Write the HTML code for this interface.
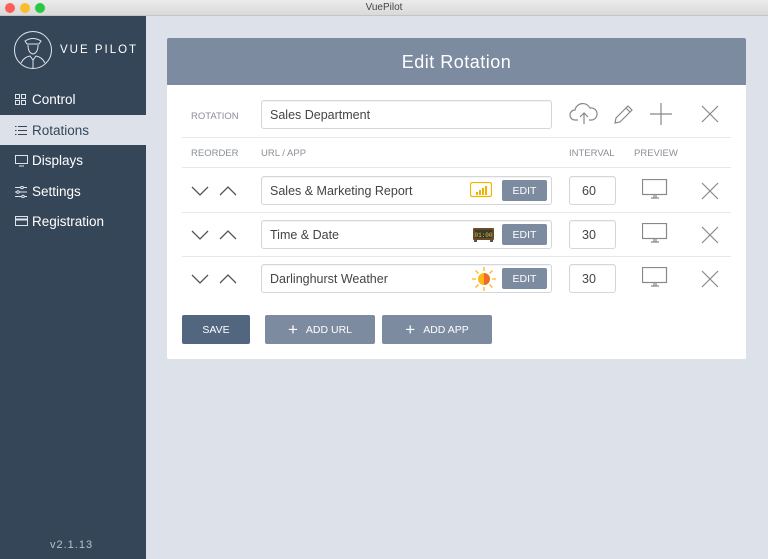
<!DOCTYPE html><html><head><style>
*{margin:0;padding:0;box-sizing:border-box}
body{width:768px;height:559px;overflow:hidden;font-family:"Liberation Sans",sans-serif;background:#dde2ea;position:relative}
.tb{position:absolute;left:0;top:0;width:768px;height:16px;background:linear-gradient(#ececec,#d9d9d9);border-bottom:1px solid #c4c4c4;text-align:center;font-size:10px;line-height:16px;color:#444}
.dot{position:absolute;top:3px;width:10px;height:10px;border-radius:50%}
.sb{position:absolute;left:0;top:16px;width:146px;height:543px;background:#364659}
.nav{position:absolute;left:0;width:146px;height:30px;color:#fff;font-size:13.5px;line-height:32px;padding-left:32px}
.nav svg{position:absolute;left:15px;top:10px}
.sel{background:#dde2ea;color:#364659}
.ab{position:absolute}
.card{position:absolute;left:167px;top:38px;width:579px;height:321px;background:#fff;border-radius:2px}
.hd{height:47px;background:#7d8ba0;color:#fff;font-size:18px;text-align:center;line-height:48px;letter-spacing:.5px;border-radius:2px 2px 0 0}
.lbl{position:absolute;font-size:9.5px;color:#8a8f96}
.inp{position:absolute;border:1px solid #d4d6da;border-radius:3px;background:#fff;font-size:12.5px;color:#444;line-height:29px;padding-left:8px;box-shadow:inset 0 1px 1px rgba(0,0,0,.05)}
.line{position:absolute;left:15px;width:549px;height:1px;background:#e6e8eb}
.edit{position:absolute;left:502px;width:45px;height:21px;background:#7d8ba0;color:#fff;font-size:10.5px;text-align:center;line-height:22px;border-radius:2px}
.btn{position:absolute;top:315px;height:29px;color:#fff;font-size:10.5px;line-height:30px;text-align:center;border-radius:2px}
</style></head><body>
<div class="tb">VuePilot
<div class="dot" style="left:5px;background:#fc5f57"></div><div class="dot" style="left:20px;background:#fdbc2e"></div><div class="dot" style="left:35px;background:#28c840"></div></div>
<div class="sb">
<svg class="ab" style="left:13px;top:14px" width="40" height="40" viewBox="0 0 40 40" fill="none" stroke="#dfe4ea" stroke-width="1"><circle cx="20" cy="20" r="18.5"/><path d="M12 11 Q20 6 28 11 L26 14 H14Z M15 15 Q15 23 20 24 Q25 23 25 15 M8 33 Q11 27 17 26 L20 30 L23 26 Q29 27 32 33 M20 30 V38"/></svg>
<div class="ab" style="left:60px;top:28px;color:#fff;font-size:11.5px;letter-spacing:2px">VUE PILOT</div>
<div class="nav" style="top:68px"><svg width="11" height="11" fill="none" stroke="#dfe4ea"><rect x=".5" y=".5" width="4" height="4"/><rect x="6.5" y=".5" width="4" height="4"/><rect x=".5" y="6.5" width="4" height="4"/><rect x="6.5" y="6.5" width="4" height="4"/></svg>Control</div>
<div class="nav sel" style="top:99px"><svg width="12" height="11" fill="none" stroke="#364659"><path d="M0 1.5h1.5M3 1.5h9M0 5.5h1.5M3 5.5h9M0 9.5h1.5M3 9.5h9"/></svg>Rotations</div>
<div class="nav" style="top:129px"><svg width="13" height="12" fill="none" stroke="#dfe4ea"><rect x=".5" y=".5" width="12" height="8"/><path d="M4 11h5"/></svg>Displays</div>
<div class="nav" style="top:160px"><svg width="12" height="12" fill="none" stroke="#dfe4ea"><path d="M0 1.5h12M0 6h12M0 10.5h12"/><circle cx="7" cy="1.5" r="1.3" fill="#364659"/><circle cx="3" cy="6" r="1.3" fill="#364659"/><circle cx="8" cy="10.5" r="1.3" fill="#364659"/></svg>Settings</div>
<div class="nav" style="top:190px"><svg width="13" height="11" fill="none" stroke="#dfe4ea"><rect x=".5" y=".5" width="12" height="9"/><path d="M0 3.5h13" stroke-width="2"/></svg>Registration</div>
<div class="ab" style="left:50px;top:523px;color:#b8c0ca;font-size:11px;letter-spacing:1px">v2.1.13</div>
</div>
<div class="card"><div class="hd">Edit Rotation</div>
<div class="lbl" style="left:24px;top:73px">ROTATION</div>
<div class="inp" style="left:94px;top:62px;width:291px;height:29px">Sales Department</div>
<svg class="ab" style="left:402px;top:64px" width="30" height="24" fill="none" stroke="#888" stroke-width="1.2"><path d="M9 18H6a5 5 0 0 1 0-10 8 8 0 0 1 15-2 6 6 0 0 1 2 12h-3M15 22V11M11 15l4-4 4 4"/></svg>
<svg class="ab" style="left:446px;top:65px" width="22" height="22" fill="none" stroke="#888" stroke-width="1.2"><path d="M2 20l1-5L15 3l4 4L7 19zM13 5l4 4"/></svg>
<svg class="ab" style="left:482px;top:64px" width="24" height="24" stroke="#888" stroke-width="1.2"><path d="M12 1v22M1 12h22"/></svg>
<svg class="ab" style="left:534px;top:67px" width="18" height="18" stroke="#888" stroke-width="1.2"><path d="M1 1l16 16M17 1L1 17"/></svg>
<div class="line" style="top:99px"></div>
<div class="lbl" style="left:24px;top:110px">REORDER</div><div class="lbl" style="left:94px;top:110px">URL / APP</div><div class="lbl" style="left:402px;top:110px">INTERVAL</div><div class="lbl" style="left:467px;top:110px">PREVIEW</div>
<div class="line" style="top:129px"></div><div class="line" style="top:174px"></div><div class="line" style="top:218px"></div>
<div class="ab" style="left:0;top:138px;width:579px;height:29px">
<svg class="ab" style="left:24px;top:9px" width="50" height="12" fill="none" stroke="#555" stroke-width="1.3"><path d="M1 2l8 8 8-8M29 10l8-8 8 8"/></svg>
<div class="inp" style="left:94px;top:0;width:291px;height:29px">Sales &amp; Marketing Report</div>
<svg class="ab" style="left:303px;top:6px" width="22" height="16" fill="none" stroke="#f0b400" stroke-width="1.2"><rect x=".5" y=".5" width="21" height="14" rx="2"/><path d="M7 13v-3M10 13V8M13 13V6M16 13V4" stroke-width="2"/></svg>
<div class="edit" style="left:335px;top:4px">EDIT</div>
<div class="inp" style="left:402px;top:0;width:47px;height:29px;padding-left:12px">60</div>
<svg class="ab" style="left:475px;top:3px" width="26" height="21" fill="none" stroke="#888" stroke-width="1.2"><rect x=".5" y=".5" width="24" height="15"/><path d="M9 19h8M12 16v3M14 16v3"/></svg>
<svg class="ab" style="left:534px;top:6px" width="18" height="18" stroke="#888" stroke-width="1.2"><path d="M1 1l16 16M17 1L1 17"/></svg></div>
<div class="ab" style="left:0;top:182px;width:579px;height:29px">
<svg class="ab" style="left:24px;top:9px" width="50" height="12" fill="none" stroke="#555" stroke-width="1.3"><path d="M1 2l8 8 8-8M29 10l8-8 8 8"/></svg>
<div class="inp" style="left:94px;top:0;width:291px;height:29px">Time &amp; Date</div>
<svg class="ab" style="left:306px;top:8px" width="21" height="14"><rect x="0" y="0" width="21" height="12" rx="1" fill="#6b4a2a"/><rect x="2" y="2" width="17" height="8" fill="#3a3a2a"/><text x="10.5" y="9" font-size="6" fill="#e0c040" text-anchor="middle" font-family="Liberation Mono">01:00</text><rect x="1" y="12" width="3" height="2" fill="#555"/><rect x="17" y="12" width="3" height="2" fill="#555"/></svg>
<div class="edit" style="left:335px;top:4px">EDIT</div>
<div class="inp" style="left:402px;top:0;width:47px;height:29px;padding-left:12px">30</div>
<svg class="ab" style="left:475px;top:3px" width="26" height="21" fill="none" stroke="#888" stroke-width="1.2"><rect x=".5" y=".5" width="24" height="15"/><path d="M9 19h8M12 16v3M14 16v3"/></svg>
<svg class="ab" style="left:534px;top:6px" width="18" height="18" stroke="#888" stroke-width="1.2"><path d="M1 1l16 16M17 1L1 17"/></svg></div>
<div class="ab" style="left:0;top:226px;width:579px;height:29px">
<svg class="ab" style="left:24px;top:9px" width="50" height="12" fill="none" stroke="#555" stroke-width="1.3"><path d="M1 2l8 8 8-8M29 10l8-8 8 8"/></svg>
<div class="inp" style="left:94px;top:0;width:291px;height:29px">Darlinghurst Weather</div>
<svg class="ab" style="left:305px;top:3px" width="24" height="24"><g stroke="#fdb813" stroke-width="1.3"><path d="M12 0v4M12 20v4M0 12h4M20 12h4M3.5 3.5l3 3M17.5 17.5l3 3M3.5 20.5l3-3M17.5 6.5l3-3"/></g><circle cx="12" cy="12" r="6" fill="#fdb813"/><path d="M12 6a6 6 0 0 1 0 12z" fill="#f26a2b"/></svg>
<div class="edit" style="left:335px;top:4px">EDIT</div>
<div class="inp" style="left:402px;top:0;width:47px;height:29px;padding-left:12px">30</div>
<svg class="ab" style="left:475px;top:3px" width="26" height="21" fill="none" stroke="#888" stroke-width="1.2"><rect x=".5" y=".5" width="24" height="15"/><path d="M9 19h8M12 16v3M14 16v3"/></svg>
<svg class="ab" style="left:534px;top:6px" width="18" height="18" stroke="#888" stroke-width="1.2"><path d="M1 1l16 16M17 1L1 17"/></svg></div>
</div>
<div class="btn" style="left:182px;width:68px;background:#536680">SAVE</div>
<div class="btn" style="left:265px;width:110px;background:#7d8ba0"><span style="font-size:17px;font-weight:100;vertical-align:-2px;margin-right:8px">+</span>ADD URL</div>
<div class="btn" style="left:382px;width:110px;background:#7d8ba0"><span style="font-size:17px;font-weight:100;vertical-align:-2px;margin-right:8px">+</span>ADD APP</div>
</body></html>
